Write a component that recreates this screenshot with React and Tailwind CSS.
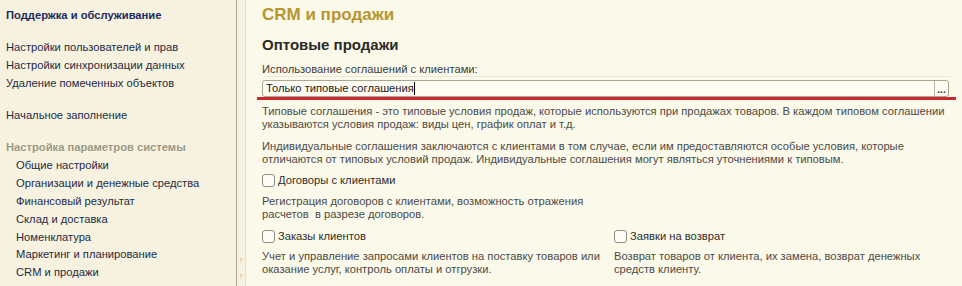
import React from "react";

function Check({ label }) {
  return (
    <label className="flex items-center gap-[3px] h-[18px]">
      <span className="w-[13px] h-[13px] rounded-[3px] border border-[#8c8c84] bg-[#fdfcf6]" />
      <span className="text-[#2e2e2a]">{label}</span>
    </label>
  );
}

export default function App() {
  const side1 = [
    "Настройки пользователей и прав",
    "Настройки синхронизации данных",
    "Удаление помеченных объектов",
  ];
  const side2 = [
    "Общие настройки",
    "Организации и денежные средства",
    "Финансовый результат",
    "Склад и доставка",
    "Номенклатура",
    "Маркетинг и планирование",
    "CRM и продажи",
  ];
  return (
    <div
      className="w-[962px] h-[286px] overflow-hidden flex bg-[#fbf9e9] text-[11.2px] leading-[15px]"
      style={{ fontFamily: '"Liberation Sans", Arial, sans-serif' }}
    >
      <aside className="w-[236px] shrink-0 bg-[#f6f2df] pl-[6px] pt-[8px] text-[#1f2a44]">
        <div className="font-bold text-[#1c2a5c] h-[15px]">Поддержка и обслуживание</div>
        <div className="mt-[17px] flex flex-col gap-[3px]">
          {side1.map((t) => (
            <div key={t} className="h-[15px]">{t}</div>
          ))}
        </div>
        <div className="mt-[17px] h-[15px]">Начальное заполнение</div>
        <div className="mt-[17px] font-bold text-[#9b9a85] h-[15px]">Настройка параметров системы</div>
        <div className="pl-[10px] mt-[3px] flex flex-col gap-[2.9px]">
          {side2.map((t) => (
            <div key={t} className="h-[15px]">{t}</div>
          ))}
        </div>
      </aside>
      <div className="w-[10px] shrink-0 bg-[#f6f2df] border-l border-[#a9a690] border-r border-r-[#e4e0cb] relative">
        <span className="absolute left-[3px] top-[252px] text-[7px] text-[#b9b6a2]">r</span>
        <span className="absolute left-[3px] top-[268px] text-[7px] text-[#b9b6a2]">r</span>
      </div>
      <main className="flex-1 pl-[10px] pt-[4px] pr-[5px] text-[#4b4b47]">
        <h1 className="pl-[6px] text-[17px] leading-[22px] font-bold text-[#b8952e]">CRM и продажи</h1>
        <h2 className="pl-[6px] mt-[10px] text-[15px] leading-[18px] font-bold text-[#2b2b27]">Оптовые продажи</h2>
        <div className="pl-[6px] mt-[8px] text-[#3c3c38] h-[15px]">Использование соглашений с клиентами:</div>
        <div className="relative ml-[6px] pt-[3px]">
          <div className="absolute left-[2px] right-[6px] top-[-1px] h-px bg-[#ece9d6]" />
          <div className="relative mr-[8px] h-[17px] border border-[#a9a790] rounded-[3px] bg-[#fdfcf3] flex items-stretch">
            <div className="flex-1 pl-[3px] flex items-center text-[#1a1a1a]">
              Только типовые соглашения<span className="w-px h-[13px] bg-black" />
            </div>
            <div className="w-[14px] border-l border-[#b9b7a1] flex items-end justify-center pb-[1px] text-[10px] leading-[10px] text-[#333] font-bold">
              ...
            </div>
          </div>
          <div className="-ml-[5px] mr-[1px] h-[3px] bg-[#c8292e]" />
        </div>
        <div className="leading-[13px]">
          <p className="pl-[6px] mt-[5px]">
            Типовые соглашения - это типовые условия продаж, которые используются при продажах товаров. В каждом типовом соглашении
            <br />
            указываются условия продаж: виды цен, график оплат и т.д.
          </p>
          <p className="pl-[6px] mt-[9px]">
            Индивидуальные соглашения заключаются с клиентами в том случае, если им предоставляются особые условия, которые
            <br />
            отличаются от типовых условий продаж. Индивидуальные соглашения могут являться уточнениями к типовым.
          </p>
          <div className="pl-[6px] mt-[5px]">
            <Check label="Договоры с клиентами" />
          </div>
          <p className="pl-[6px] mt-[6px]">
            Регистрация договоров с клиентами, возможность отражения
            <br />
            расчетов&nbsp; в разрезе договоров.
          </p>
          <div className="pl-[6px] mt-[6px] flex">
            <div className="w-[352px]">
              <Check label="Заказы клиентов" />
              <p className="mt-[5px]">
                Учет и управление запросами клиентов на поставку товаров или
                <br />
                оказание услуг, контроль оплаты и отгрузки.
              </p>
            </div>
            <div>
              <Check label="Заявки на возврат" />
              <p className="mt-[5px]">
                Возврат товаров от клиента, их замена, возврат денежных
                <br />
                средств клиенту.
              </p>
            </div>
          </div>
        </div>
      </main>
    </div>
  );
}
